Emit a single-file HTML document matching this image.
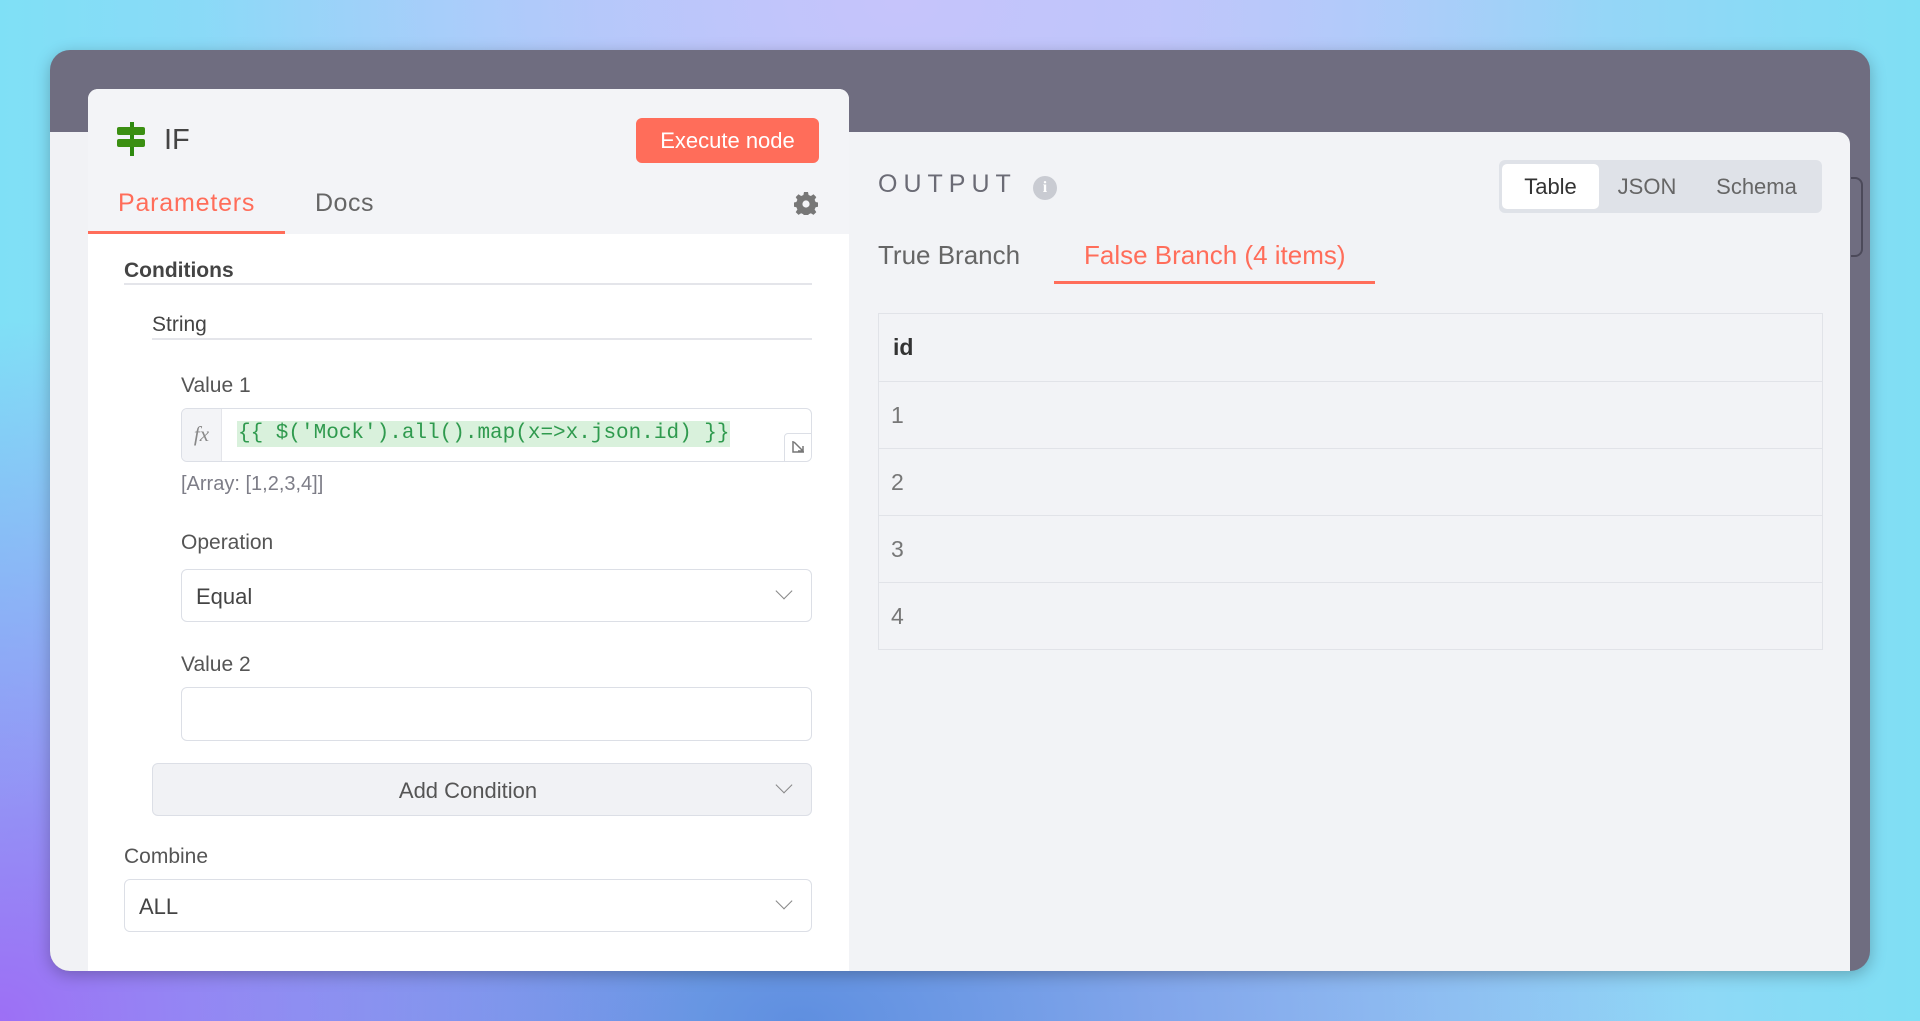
<!DOCTYPE html>
<html><head><meta charset="utf-8"><style>
*{box-sizing:border-box;margin:0;padding:0}
body{width:1920px;height:1021px;overflow:hidden;position:relative;font-family:"Liberation Sans",sans-serif;color:#555;
background:
radial-gradient(ellipse 700px 500px at 900px 0px,#c6c4fb 0%,rgba(198,196,251,0) 100%),
radial-gradient(ellipse 700px 700px at 0px 1021px,#9d6ff5 0%,rgba(157,111,245,0) 100%),
radial-gradient(ellipse 900px 500px at 800px 1021px,#5f8fe0 0%,rgba(95,143,224,0) 100%),
linear-gradient(90deg,#7fe0f6 0%,#a9c9fb 40%,#b5c8fb 60%,#7fdff4 100%);}
.win{position:absolute;left:50px;top:50px;width:1820px;height:921px;border-radius:20px;background:#6f6d80;overflow:hidden;box-shadow:0 4px 16px rgba(0,0,0,.25)}
.strip{position:absolute;left:0;top:82px;width:60px;height:839px;background:#f1f2f5}
.right{position:absolute;left:790px;top:82px;width:1010px;height:839px;background:#f2f3f6;border-top-right-radius:12px}
.edge{position:absolute;left:1801px;top:127px;width:12px;height:80px;border:2px solid #4c4a5a;border-left:none;border-radius:0 8px 8px 0}
.panel{position:absolute;left:38px;top:39px;width:761px;height:900px;background:#fff;border-radius:10px 10px 0 0;overflow:hidden}
.ph{height:145px;background:#f3f4f7;position:relative}
.abs{position:absolute}
.lbl{position:absolute;font-size:21px;color:#555}
.line{position:absolute;height:2px;background:#e4e5ea}
.inp{position:absolute;border:1px solid #dcdfe6;border-radius:6px;background:#fff}
.chev{position:absolute;width:12px;height:12px;border-right:1.5px solid #888;border-bottom:1.5px solid #888;transform:rotate(45deg)}
td{border-top:1px solid #e1e3e8;height:67px;padding-left:12px;font-size:23px;color:#777}
</style></head><body>
<div class="win">
  <div class="strip"></div>
  <div class="right">
    <div class="abs" style="left:38px;top:38px;font-size:25px;letter-spacing:6px;color:#6b6b75">OUTPUT</div>
    <div class="abs" style="left:193px;top:44px;width:24px;height:24px;border-radius:50%;background:#c9cbd2;color:#fff;font-size:16px;font-weight:bold;text-align:center;line-height:24px;font-family:'Liberation Serif',serif">i</div>
    <div class="abs" style="left:659px;top:28px;width:323px;height:53px;background:#dfe2e8;border-radius:6px">
      <div class="abs" style="left:3px;top:4px;width:97px;height:45px;background:#fff;border-radius:5px;text-align:center;line-height:45px;font-size:22px;color:#333">Table</div>
      <div class="abs" style="left:110px;top:4px;width:76px;line-height:45px;text-align:center;font-size:22px;color:#666">JSON</div>
      <div class="abs" style="left:200px;top:4px;width:115px;line-height:45px;text-align:center;font-size:22px;color:#666">Schema</div>
    </div>
    <div class="abs" style="left:38px;top:108px;font-size:26px;color:#666">True Branch</div>
    <div class="abs" style="left:244px;top:108px;font-size:26px;color:#ff6d5a">False Branch (4 items)</div>
    <div class="abs" style="left:214px;top:149px;width:321px;height:3px;background:#ff6d5a"></div>
    <table class="abs" style="left:38px;top:181px;width:945px;border:1px solid #e1e3e8;border-collapse:collapse">
      <tr><td style="border-top:none;font-weight:bold;color:#333;height:68px;padding-left:14px">id</td></tr>
      <tr><td>1</td></tr><tr><td>2</td></tr><tr><td>3</td></tr><tr><td>4</td></tr>
    </table>
  </div>
  <div class="edge"></div>
  <div class="panel">
    <div class="ph">
      <svg class="abs" style="left:27px;top:33px" width="34" height="34" viewBox="0 0 34 34"><rect x="15" y="0" width="4" height="34" fill="#2f8a10"/><rect x="2" y="5" width="28" height="8" rx="2" fill="#3b8f12"/><rect x="2" y="17" width="28" height="8" rx="2" fill="#3b8f12"/></svg>
      <div class="abs" style="left:76px;top:35px;font-size:29px;color:#444">IF</div>
      <div class="abs" style="left:548px;top:29px;width:183px;height:45px;background:#ff6d5a;border-radius:6px;color:#fff;font-size:22px;text-align:center;line-height:45px">Execute node</div>
      <div class="abs" style="left:30px;top:100px;font-size:25px;letter-spacing:0.8px;color:#ff6d5a">Parameters</div>
      <div class="abs" style="left:227px;top:100px;font-size:25px;letter-spacing:0.5px;color:#666">Docs</div>
      <div class="abs" style="left:0;top:142px;width:197px;height:3px;background:#ff6d5a"></div>
      <svg class="abs" style="left:706px;top:102px" width="24" height="24" viewBox="0 0 24 24"><path fill="#777" d="M10 1h4l.6 3 2.3 1 2.6-1.7 2.8 2.8L20.6 8.7l1 2.3 3 .6v4l-3 .6-1 2.3 1.7 2.6-2.8 2.8-2.6-1.7-2.3 1-.6 3h-4l-.6-3-2.3-1-2.6 1.7-2.8-2.8 1.7-2.6-1-2.3-3-.6v-4l3-.6 1-2.3L1.7 6.1 4.5 3.3l2.6 1.7 2.3-1z"/><circle cx="12" cy="13" r="3.6" fill="#f3f4f7"/></svg>
    </div>
    <div class="lbl" style="left:36px;top:170px;color:#444;font-weight:600">Conditions</div>
    <div class="line" style="left:36px;top:194px;width:688px"></div>
    <div class="lbl" style="left:64px;top:224px;color:#444">String</div>
    <div class="line" style="left:64px;top:249px;width:660px"></div>
    <div class="lbl" style="left:93px;top:285px">Value 1</div>
    <div class="inp" style="left:93px;top:319px;width:631px;height:54px;overflow:hidden">
      <div class="abs" style="left:0;top:0;width:40px;height:54px;background:#f3f4f7;border-right:1px solid #e4e5ea;font-family:'Liberation Serif',serif;font-style:italic;font-size:21px;color:#888;text-align:center;line-height:50px">fx</div>
      <div class="abs" style="left:55px;top:12px;background:#d9f1dc;color:#2f9a4e;font-family:'Liberation Mono',monospace;font-size:21px;line-height:26px;padding:0 1px;white-space:pre">{{ $('Mock').all().map(x=>x.json.id) }}</div>
      <div class="abs" style="left:602px;top:24px;width:28px;height:29px;border:1px solid #dcdfe6;border-radius:4px 0 0 0;background:#fff"><svg width="26" height="26" viewBox="0 0 26 26"><path d="M8 7v11h11M9 8l9 9M18 12v5h-5" stroke="#777" stroke-width="1.5" fill="none"/></svg></div>
    </div>
    <div class="abs" style="left:93px;top:384px;font-size:20px;color:#7d7d87">[Array: [1,2,3,4]]</div>
    <div class="lbl" style="left:93px;top:442px">Operation</div>
    <div class="inp" style="left:93px;top:480px;width:631px;height:53px"><div class="abs" style="left:14px;top:14px;font-size:22px;color:#444">Equal</div><div class="chev" style="left:596px;top:15px"></div></div>
    <div class="lbl" style="left:93px;top:564px">Value 2</div>
    <div class="inp" style="left:93px;top:598px;width:631px;height:54px"></div>
    <div class="inp" style="left:64px;top:674px;width:660px;height:53px;background:#f1f2f5"><div class="abs" style="left:0;width:100%;top:14px;text-align:center;font-size:22px;color:#555;padding-right:100px;padding-left:72px">Add Condition</div><div class="chev" style="left:625px;top:15px"></div></div>
    <div class="lbl" style="left:36px;top:756px">Combine</div>
    <div class="inp" style="left:36px;top:790px;width:688px;height:53px"><div class="abs" style="left:14px;top:14px;font-size:22px;color:#444">ALL</div><div class="chev" style="left:653px;top:15px"></div></div>
  </div>
</div>
</body></html>
